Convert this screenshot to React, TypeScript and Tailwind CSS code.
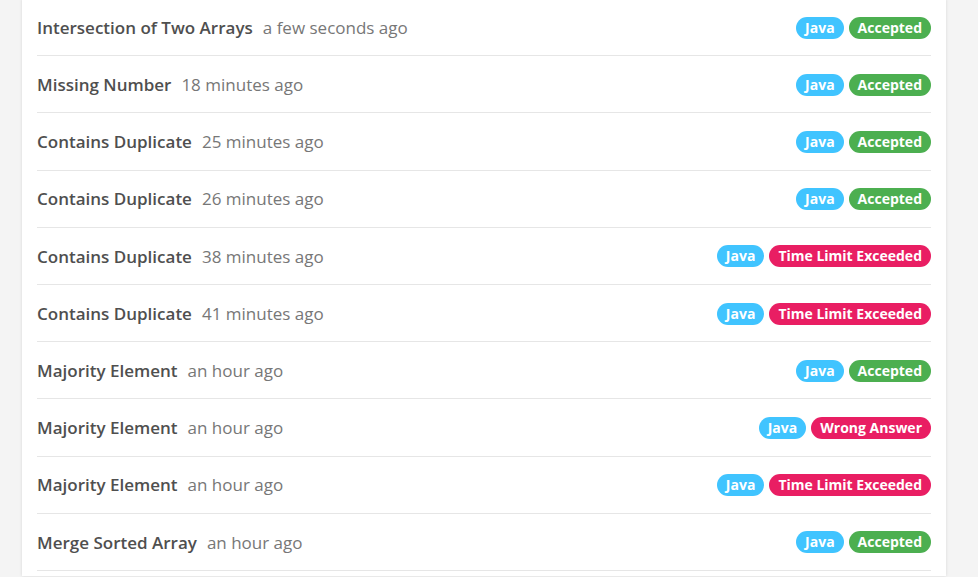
interface Submission {
  title: string;
  time: string;
  lang: string;
  status: "Accepted" | "Time Limit Exceeded" | "Wrong Answer";
}

const SUBMISSIONS: Submission[] = [
  { title: "Intersection of Two Arrays", time: "a few seconds ago", lang: "Java", status: "Accepted" },
  { title: "Missing Number", time: "18 minutes ago", lang: "Java", status: "Accepted" },
  { title: "Contains Duplicate", time: "25 minutes ago", lang: "Java", status: "Accepted" },
  { title: "Contains Duplicate", time: "26 minutes ago", lang: "Java", status: "Accepted" },
  { title: "Contains Duplicate", time: "38 minutes ago", lang: "Java", status: "Time Limit Exceeded" },
  { title: "Contains Duplicate", time: "41 minutes ago", lang: "Java", status: "Time Limit Exceeded" },
  { title: "Majority Element", time: "an hour ago", lang: "Java", status: "Accepted" },
  { title: "Majority Element", time: "an hour ago", lang: "Java", status: "Wrong Answer" },
  { title: "Majority Element", time: "an hour ago", lang: "Java", status: "Time Limit Exceeded" },
  { title: "Merge Sorted Array", time: "an hour ago", lang: "Java", status: "Accepted" },
];

export default function App() {
  return (
    <div
      className="h-[577px] overflow-hidden bg-[#f4f4f4]"
      style={{ fontFamily: '"Open Sans", "Noto Sans", sans-serif' }}
    >
      <div className="ml-[22px] mr-[32px] h-full bg-white px-[15px] shadow-[0_0_3px_rgba(0,0,0,0.12)]">
        <ul className="-mt-[1px]">
          {SUBMISSIONS.map((s, i) => (
            <li
              key={i}
              className="flex h-[57.2px] items-center justify-between border-b border-[#e6e6e6] pt-[1px]"
            >
              <div className="flex items-baseline gap-[10px]">
                <span className="text-[17px] font-semibold text-[#4f4f4f]">{s.title}</span>
                <span className="text-[17px] text-[#777]">{s.time}</span>
              </div>
              <div className="flex items-center gap-[5px] text-[14px] font-bold leading-[22px] text-white">
                <span className="rounded-full bg-[#40c4ff] px-[9px]">{s.lang}</span>
                <span
                  className={
                    s.status === "Accepted"
                      ? "rounded-full bg-[#4caf50] px-[9px]"
                      : "rounded-full bg-[#e91e63] px-[9px]"
                  }
                >
                  {s.status}
                </span>
              </div>
            </li>
          ))}
        </ul>
      </div>
    </div>
  );
}
